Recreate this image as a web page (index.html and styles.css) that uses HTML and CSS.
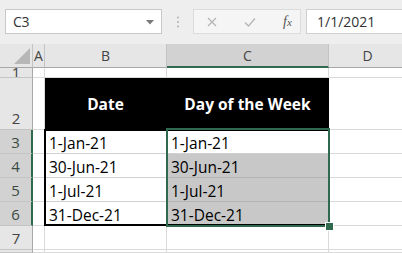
FILE: index.html
```html
<!DOCTYPE html>
<html>
<head>
<meta charset="utf-8">
<link rel="stylesheet" href="styles.css">
</head>
<body>
<div class="app">
  <div class="toolbar">
    <div class="namebox">
      <span class="nb-text">C3</span>
      <svg class="nb-arrow" width="8" height="5" viewBox="0 0 8 5"><path d="M0 0 L8 0 L4 4.5 Z" fill="#7a7a7a"/></svg>
    </div>
    <div class="dots">
      <svg width="4" height="12" viewBox="0 0 4 12"><circle cx="2" cy="1.5" r="1" fill="#b0b0b0"/><circle cx="2" cy="6" r="1" fill="#b0b0b0"/><circle cx="2" cy="10.5" r="1" fill="#b0b0b0"/></svg>
    </div>
    <div class="fbtns">
      <svg class="btn-x" width="10" height="10" viewBox="0 0 10 10"><path d="M1 1 L9 9 M9 1 L1 9" stroke="#b4b4b4" stroke-width="1.2" fill="none"/></svg>
      <svg class="btn-check" width="12" height="10" viewBox="0 0 12 10"><path d="M1 5.5 L4.5 9 L11 1.5" stroke="#b4b4b4" stroke-width="1.2" fill="none"/></svg>
      <span class="btn-fx">f<span class="fx-x">x</span></span>
    </div>
    <div class="formula">1/1/2021</div>
  </div>
  <div class="sheet">
    <!-- header row -->
    <div class="c hdr corner"><svg width="16" height="16" viewBox="0 0 16 16"><path d="M16 0 L16 16 L0 16 Z" fill="#b7b7b7"/></svg></div>
    <div class="c hdr col">A</div>
    <div class="c hdr col">B</div>
    <div class="c hdr col sel-col">C</div>
    <div class="c hdr col">D</div>
    <div class="c hdr col"></div>
    <!-- row 1 -->
    <div class="c rh r1"><span>1</span></div>
    <div class="c"></div><div class="c"></div><div class="c"></div><div class="c"></div><div class="c"></div>
    <!-- row 2 -->
    <div class="c rh r2">2</div>
    <div class="c"></div>
    <div class="c th">Date</div>
    <div class="c th">Day of the Week</div>
    <div class="c"></div><div class="c"></div>
    <!-- row 3 -->
    <div class="c rh sel-row">3</div>
    <div class="c"></div>
    <div class="c td">1-Jan-21</div>
    <div class="c td">1-Jan-21</div>
    <div class="c"></div><div class="c"></div>
    <!-- row 4 -->
    <div class="c rh sel-row">4</div>
    <div class="c"></div>
    <div class="c td">30-Jun-21</div>
    <div class="c td fill">30-Jun-21</div>
    <div class="c"></div><div class="c"></div>
    <!-- row 5 -->
    <div class="c rh sel-row">5</div>
    <div class="c"></div>
    <div class="c td">1-Jul-21</div>
    <div class="c td fill">1-Jul-21</div>
    <div class="c"></div><div class="c"></div>
    <!-- row 6 -->
    <div class="c rh sel-row">6</div>
    <div class="c"></div>
    <div class="c td">31-Dec-21</div>
    <div class="c td fill">31-Dec-21</div>
    <div class="c"></div><div class="c"></div>
    <!-- row 7 -->
    <div class="c rh">7</div>
    <div class="c"></div><div class="c"></div><div class="c"></div><div class="c"></div><div class="c"></div>
    <!-- row 8 (mostly off-screen) -->
    <div class="c rh"></div>
    <div class="c"></div><div class="c"></div><div class="c"></div><div class="c"></div><div class="c"></div>

    <div class="outline"></div>
    <div class="selection"><div class="handle"></div></div>
  </div>
</div>
</body>
</html>
```

FILE: styles.css
```css
* { box-sizing: border-box; }
html, body { margin: 0; padding: 0; }
body {
  width: 402px;
  height: 253px;
  overflow: hidden;
  background: #ffffff;
  font-family: "Open Sans", "Noto Sans", sans-serif;
}
.app { width: 402px; height: 253px; overflow: hidden; }

.toolbar {
  height: 44px;
  background: #eeeeee;
  display: flex;
  align-items: flex-start;
  padding: 9px 0 0 5px;
}
.namebox {
  width: 157px;
  height: 25px;
  background: #ffffff;
  border: 1px solid #c8c8c8;
  display: flex;
  align-items: center;
  justify-content: space-between;
  padding: 0 7px 0 7px;
}
.nb-text { font-size: 14px; color: #333; letter-spacing: -0.3px; }
.nb-arrow { margin-top: 1px; }
.dots {
  width: 31px;
  height: 25px;
  display: flex;
  align-items: center;
  justify-content: center;
}
.fbtns {
  width: 108px;
  height: 25px;
  background: #f5f5f5;
  border: 1px solid #dcdcdc;
  display: flex;
  align-items: center;
  padding-left: 13px;
}
.btn-x { margin-right: 27px; }
.btn-check { margin-right: 27px; }
.btn-fx {
  font-family: "Liberation Serif", serif;
  font-style: italic;
  font-size: 14px;
  color: #555;
}
.fx-x { font-size: 11px; }
.formula {
  margin-left: 5px;
  flex: 1;
  height: 25px;
  background: #ffffff;
  border: 1px solid #d0d0d0;
  border-right: none;
  display: flex;
  align-items: center;
  padding-left: 10px;
  font-size: 14px;
  color: #333;
}

.sheet {
  position: relative;
  display: grid;
  grid-template-columns: 33px 12px 122px 162px 78px 1fr;
  grid-template-rows: 24px 10px 52px 24px 24px 24px 24px 24px 1fr;
  height: 209px;
}
.c {
  border-right: 1px solid #dadada;
  border-bottom: 1px solid #dadada;
  overflow: hidden;
  background: #ffffff;
}
.hdr {
  background: #e6e6e6;
  border-bottom: 1px solid #a8a8a8;
  border-right: 1px solid #c4c4c4;
}
.corner {
  display: flex;
  align-items: flex-end;
  justify-content: flex-end;
  padding: 0 2px 3px 0;
}
.col {
  display: flex;
  align-items: center;
  justify-content: center;
  font-size: 14px;
  color: #444;
}
.sel-col {
  background: #d2d2d2;
  border-bottom: 2px solid #2f6a4f;
}
.rh {
  background: #e6e6e6;
  border-right: 1px solid #a8a8a8;
  border-bottom: 1px solid #c4c4c4;
  display: flex;
  align-items: center;
  justify-content: center;
  font-size: 15px;
  color: #444;
}
.r1 { align-items: flex-start; }
.r1 span { display: block; margin-top: -6px; line-height: 20px; }
.r2 { align-items: flex-end; padding-bottom: 1px; }
.sel-row {
  background: #d2d2d2;
  border-right: 2px solid #2f6a4f;
  color: #3a4a42;
}
.th {
  background: #000000;
  border-color: #000000;
  color: #ffffff;
  font-weight: 700;
  font-size: 15.5px;
  display: flex;
  align-items: center;
  justify-content: center;
  padding-top: 1px;
}
.td {
  display: flex;
  align-items: center;
  padding-left: 4px;
  padding-top: 2px;
  font-size: 15.5px;
  color: #000;
  border-bottom-color: #d0d0d0;
}
.fill { background: #c8c8c8; border-bottom-color: #b4b4b4; border-right-color: #c8c8c8; }

.outline {
  position: absolute;
  left: 44px;
  top: 85px;
  width: 286px;
  height: 97px;
  border: 2px solid #000;
  pointer-events: none;
}
.selection {
  position: absolute;
  left: 166px;
  top: 84px;
  width: 164px;
  height: 99px;
  border: 2px solid #2f6a4f;
  pointer-events: none;
}
.handle {
  position: absolute;
  right: -5px;
  bottom: -5px;
  width: 7px;
  height: 7px;
  background: #2f6a4f;
  outline: 1px solid #ffffff;
}
```
